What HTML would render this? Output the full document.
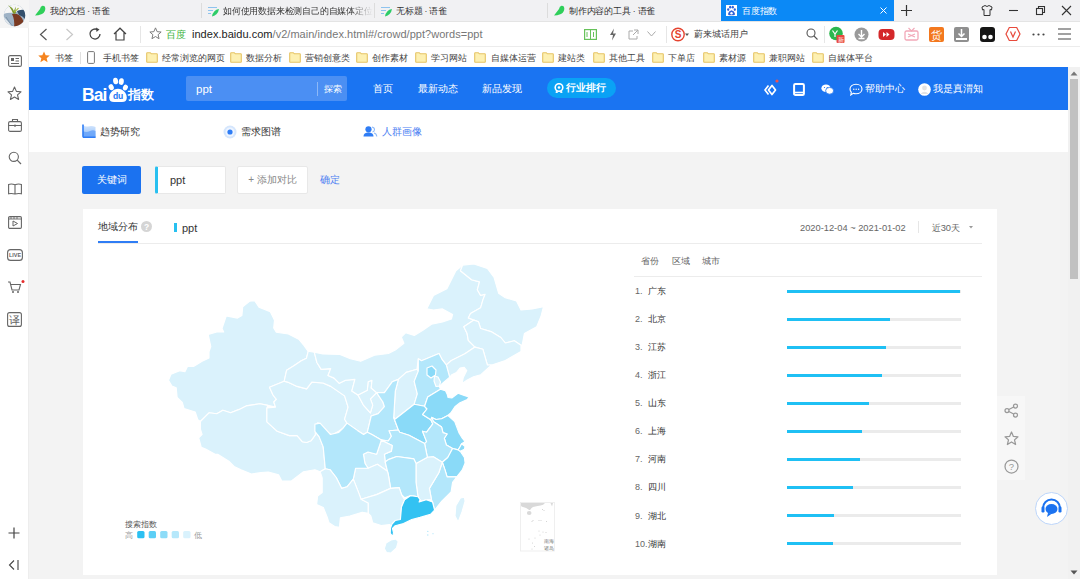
<!DOCTYPE html>
<html><head><meta charset="utf-8">
<style>
*{box-sizing:border-box}
html,body{margin:0;padding:0;width:1080px;height:579px;overflow:hidden;background:#fff;font-family:"Liberation Sans",sans-serif;}
.a{position:absolute;white-space:nowrap}
#tabbar{position:absolute;left:0;top:0;width:1080px;height:21px;background:#f1f1f3;}
.tab{position:absolute;top:0;height:21px;font-size:8.5px;color:#333;line-height:21px;letter-spacing:-0.2px}
.tsep{position:absolute;top:3px;width:1px;height:15px;background:#dcdcdc}
#addr{position:absolute;left:29px;top:21px;width:1051px;height:25px;background:#fff;border-top:1px solid #e4e4e4}
#bm{position:absolute;left:29px;top:46px;width:1051px;height:21px;background:#fff;border-top:1px solid #ececec;font-size:8.5px;color:#444}
#side{position:absolute;left:0;top:21px;width:29px;height:558px;background:#fff;border-right:1px solid #ededed}
#page{position:absolute;left:29px;top:67px;width:1039px;height:512px;background:#f3f3f3;overflow:hidden}
#hdr{position:absolute;left:0;top:0;width:1039px;height:43px;background:#1a74f2}
#subnav{position:absolute;left:0;top:43px;width:1039px;height:42px;background:#fff}
#sb{position:absolute;left:1068px;top:67px;width:12px;height:512px;background:#f1f1f1}
.bt{top:5px;line-height:12px}
.hn{top:16px;font-size:10px;color:#fff;line-height:12px}
.sn{top:16px;font-size:10px;color:#333;line-height:12px}
.th{top:46px;font-size:9px;color:#666;line-height:12px}
.rk{left:552px;font-size:9px;color:#666;line-height:12px}
.rn{left:565px;font-size:9px;color:#333;line-height:12px}
.fold{position:absolute;top:6px;width:11px;height:9px;background:#f8e6a5;border:1px solid #e0c66e;border-radius:1px}
</style></head>
<body>
<div id="tabbar">
  <div class="tsep" style="left:201px"></div>
  <div class="tsep" style="left:374px"></div>
  <div class="tsep" style="left:547px"></div>
  <svg class="a" style="left:34px;top:5px" width="12" height="11" viewBox="0 0 12 11"><path d="M1 10.5 L6 4 Q6.5 1 8.5 0.8 Q11 0.5 11.3 3 Q11.5 7 8 9 Q4 10.5 1 10.5Z" fill="#2fcf5a"/></svg>
  <div class="tab" style="left:50px;top:1px">我的文档 · 语雀</div>
  <svg class="a" style="left:208px;top:6px" width="12" height="11" viewBox="0 0 12 11"><path d="M0 1.5h9M0 4.5h5M0 7.5h3" stroke="#8ec3ee" stroke-width="1"/><path d="M4 10.5 Q5 4 11 3 Q10 9 4 10.5Z" fill="#2ccc68"/></svg>
  <div class="tab" style="left:223px;top:1px;width:150px;overflow:hidden;-webkit-mask-image:linear-gradient(90deg,#000 85%,transparent)">如何使用数据来检测自己的自媒体定位</div>
  <svg class="a" style="left:381px;top:6px" width="12" height="11" viewBox="0 0 12 11"><path d="M0 1.5h9M0 4.5h5M0 7.5h3" stroke="#8ec3ee" stroke-width="1"/><path d="M4 10.5 Q5 4 11 3 Q10 9 4 10.5Z" fill="#2ccc68"/></svg>
  <div class="tab" style="left:396px;top:1px">无标题 · 语雀</div>
  <svg class="a" style="left:553px;top:5px" width="12" height="11" viewBox="0 0 12 11"><path d="M1 10.5 L6 4 Q6.5 1 8.5 0.8 Q11 0.5 11.3 3 Q11.5 7 8 9 Q4 10.5 1 10.5Z" fill="#2fcf5a"/></svg>
  <div class="tab" style="left:569px;top:1px">制作内容的工具 · 语雀</div>
  <div class="a" style="left:721px;top:0;width:173px;height:21px;background:#0b89f6"></div>
  <div class="a" style="left:726px;top:5px;width:11px;height:11px;background:#fff"></div>
  <svg class="a" style="left:726px;top:5px" width="11" height="11" viewBox="0 0 11 11"><ellipse cx="2.2" cy="4.6" rx="1.1" ry="1.4" fill="#2f62d8"/><ellipse cx="4.2" cy="2.2" rx="1.1" ry="1.4" fill="#2f62d8"/><ellipse cx="6.8" cy="2.2" rx="1.1" ry="1.4" fill="#2f62d8"/><ellipse cx="8.8" cy="4.6" rx="1.1" ry="1.4" fill="#2f62d8"/><path d="M2 8.8 Q2.5 6 5.5 5.3 Q8.5 6 9 8.8 Q9 10.3 7.5 10.3 H3.5 Q2 10.3 2 8.8Z" fill="#2f62d8"/><circle cx="5.5" cy="8.3" r="1.2" fill="#fff"/></svg>
  <div class="tab" style="left:742px;top:1px;color:#fff">百度指数</div>
  <svg class="a" style="left:880px;top:7px" width="7" height="7" viewBox="0 0 7 7"><path d="M0.5 0.5L6.5 6.5M6.5 0.5L0.5 6.5" stroke="#fff" stroke-width="1"/></svg>
  <svg class="a" style="left:900px;top:4px" width="13" height="13" viewBox="0 0 13 13"><path d="M6.5 1V12M1 6.5H12" stroke="#333" stroke-width="1.2"/></svg>
  <svg class="a" style="left:981px;top:4px" width="12" height="13" viewBox="0 0 12 13"><path d="M4 1.5 L1 3 L1.5 6 L3 5.5 V11.5 H9 V5.5 L10.5 6 L11 3 L8 1.5 Q6 3.5 4 1.5Z" fill="none" stroke="#333" stroke-width="1"/></svg>
  <svg class="a" style="left:1008px;top:5px" width="11" height="11" viewBox="0 0 11 11"><path d="M1 5.5H10" stroke="#333" stroke-width="1.1"/></svg>
  <svg class="a" style="left:1035px;top:5px" width="11" height="11" viewBox="0 0 11 11"><rect x="1.5" y="3.5" width="6" height="6" fill="none" stroke="#333" stroke-width="1.1"/><path d="M3.5 3.5V1.5H9.5V7.5H7.5" fill="none" stroke="#333" stroke-width="1.1"/></svg>
  <svg class="a" style="left:1061px;top:5px" width="11" height="11" viewBox="0 0 11 11"><path d="M1 1L10 10M10 1L1 10" stroke="#333" stroke-width="1.1"/></svg>
</div>
<div id="side">
  <svg class="a" style="left:8px;top:34px" width="14" height="12" viewBox="0 0 14 12"><rect x="0.6" y="0.6" width="12.8" height="10.8" rx="1.5" fill="none" stroke="#666" stroke-width="1.1"/><rect x="3" y="3" width="3" height="3" fill="#666"/><path d="M7.5 3.5H11M7.5 6H11M3 8.5H11" stroke="#666" stroke-width="1"/></svg>
  <svg class="a" style="left:7px;top:65px" width="15" height="15" viewBox="0 0 15 15"><path d="M7.5 1 L9.4 5.4 L14 5.8 L10.5 8.9 L11.6 13.5 L7.5 11 L3.4 13.5 L4.5 8.9 L1 5.8 L5.6 5.4Z" fill="none" stroke="#666" stroke-width="1.1" stroke-linejoin="round"/></svg>
  <svg class="a" style="left:8px;top:97px" width="14" height="14" viewBox="0 0 14 14"><rect x="0.6" y="3.6" width="12.8" height="9.8" rx="1.5" fill="none" stroke="#666" stroke-width="1.1"/><path d="M4.5 3.5V1.5H9.5V3.5M0.6 7.5H13.4M7 6.5V9" fill="none" stroke="#666" stroke-width="1.1"/></svg>
  <svg class="a" style="left:8px;top:130px" width="14" height="14" viewBox="0 0 14 14"><circle cx="5.8" cy="5.8" r="4.6" fill="none" stroke="#666" stroke-width="1.1"/><path d="M9.2 9.2L13 13" stroke="#666" stroke-width="1.2"/></svg>
  <svg class="a" style="left:8px;top:162px" width="14" height="12" viewBox="0 0 14 12"><path d="M0.6 1.5 Q3.5 0.5 7 1.8 Q10.5 0.5 13.4 1.5 V10.8 Q10.5 10 7 11 Q3.5 10 0.6 10.8Z M7 1.8V11" fill="none" stroke="#666" stroke-width="1.1"/></svg>
  <svg class="a" style="left:8px;top:195px" width="14" height="13" viewBox="0 0 14 13"><rect x="0.6" y="0.6" width="12.8" height="11.8" rx="1.2" fill="none" stroke="#666" stroke-width="1.1"/><path d="M0.6 3H13.4M3 0.6V3M6 0.6V3M9 0.6V3" stroke="#666" stroke-width="0.9"/><path d="M5 5 L9.5 7.5 L5 10Z" fill="none" stroke="#666" stroke-width="1"/></svg>
  <svg class="a" style="left:7px;top:228px" width="16" height="12" viewBox="0 0 16 12"><rect x="0.6" y="0.6" width="14.8" height="10.8" rx="3" fill="none" stroke="#666" stroke-width="1.1"/><text x="8" y="8.3" text-anchor="middle" font-size="5.5" font-weight="bold" fill="#666" font-family="Liberation Sans">LIVE</text></svg>
  <svg class="a" style="left:7px;top:259px" width="18" height="14" viewBox="0 0 18 14"><path d="M1 2 H3 L5 10 H12 L13.5 4.5 H4" fill="none" stroke="#666" stroke-width="1.1"/><circle cx="6" cy="12" r="1" fill="#666"/><circle cx="11" cy="12" r="1" fill="#666"/><circle cx="16" cy="1.5" r="1.5" fill="#e52c2c"/></svg>
  <svg class="a" style="left:7px;top:291px" width="15" height="15" viewBox="0 0 15 15"><rect x="0.6" y="0.6" width="13.8" height="13.8" rx="2" fill="none" stroke="#666" stroke-width="1.1"/><text x="7.5" y="11.5" text-anchor="middle" font-size="10.5" fill="#666" font-family="Liberation Sans">译</text></svg>
  <svg class="a" style="left:8px;top:506px" width="12" height="12" viewBox="0 0 12 12"><path d="M6 0.5V11.5M0.5 6H11.5" stroke="#444" stroke-width="1.2"/></svg>
  <svg class="a" style="left:8px;top:538px" width="12" height="12" viewBox="0 0 12 12"><path d="M6 1.5 L1.5 6 L6 10.5M10 1V11" fill="none" stroke="#444" stroke-width="1.1"/></svg>
</div>
<div id="avatar" class="a" style="left:0;top:0;width:29px;height:28px;background:#f5f5f5">
  <svg class="a" style="left:3px;top:4px" width="23" height="23" viewBox="0 0 23 23"><defs><clipPath id="avc"><circle cx="11.5" cy="11.5" r="10.7"/></clipPath></defs><g clip-path="url(#avc)"><rect x="0" y="0" width="23" height="23" fill="#9fb3c6"/><path d="M0 0 H23 V6 Q16 5 12 9 Q6 8 0 10Z" fill="#f6f6f6"/><path d="M14 7 Q19 5 23 6 V16 Q20 12 16 11Z" fill="#34506c"/><path d="M9 10 Q13 9 16 11 Q20 14 21 20 L14 23 H11 Q12 16 9 10Z" fill="#7a3a22"/><path d="M0 12 Q4 16 9 22 L11 23 H0Z" fill="#dfe6ec"/><path d="M3 13 Q6 18 10 23" stroke="#7f95aa" stroke-width="1" fill="none"/></g><path d="M5 1 Q7 3 8.5 6 Q9.5 9 11 10 L13 9 Q12 6 13 2.5 Q11.5 5 11 7 Q9 3 5 1Z" fill="#7d9a2e"/><path d="M11 8 Q14 6 15.5 4" stroke="#a9b83a" stroke-width="1.2" fill="none"/></svg>
</div>
<div id="addr">
  <svg class="a" style="left:10px;top:6px" width="9" height="13" viewBox="0 0 9 13"><path d="M7.5 1 L1.5 6.5 L7.5 12" fill="none" stroke="#555" stroke-width="1.2"/></svg>
  <svg class="a" style="left:36px;top:6px" width="9" height="13" viewBox="0 0 9 13"><path d="M1.5 1 L7.5 6.5 L1.5 12" fill="none" stroke="#c8c8c8" stroke-width="1.2"/></svg>
  <svg class="a" style="left:59px;top:5px" width="14" height="14" viewBox="0 0 14 14"><path d="M12 7 A5 5 0 1 1 9.5 2.7" fill="none" stroke="#444" stroke-width="1.3"/><path d="M8 0.5 L11.5 2.5 L8.5 5Z" fill="#444"/></svg>
  <svg class="a" style="left:84px;top:5px" width="14" height="14" viewBox="0 0 14 14"><path d="M1 7 L7 1.2 L13 7 M3 5.5 V13 H11 V5.5" fill="none" stroke="#444" stroke-width="1.2"/></svg>
  <div class="a" style="left:111px;top:4px;width:1px;height:17px;background:#e6e6e6"></div>
  <svg class="a" style="left:120px;top:5px" width="13" height="13" viewBox="0 0 15 15"><path d="M7.5 1 L9.4 5.4 L14 5.8 L10.5 8.9 L11.6 13.5 L7.5 11 L3.4 13.5 L4.5 8.9 L1 5.8 L5.6 5.4Z" fill="none" stroke="#777" stroke-width="1.1" stroke-linejoin="round"/></svg>
  <div class="a" style="left:137px;top:6px;font-size:10px;color:#3ab33a;line-height:13px">百度</div>
  <div class="a" style="left:163px;top:4px;font-size:11px;color:#222;line-height:17px;letter-spacing:0.03px">index.baidu.com<span style="color:#777">/v2/main/index.html#/crowd/ppt?words=ppt</span></div>
  <svg class="a" style="left:555px;top:7px" width="13" height="11" viewBox="0 0 13 11"><rect x="0.6" y="0.6" width="11.8" height="9.8" fill="none" stroke="#67c25a" stroke-width="1.2"/><path d="M6.5 0.6V10.4M3 3V8M9.5 3V8" stroke="#67c25a" stroke-width="1"/></svg>
  <svg class="a" style="left:580px;top:6px" width="8" height="13" viewBox="0 0 8 13"><path d="M5 0.5 L1 7 H4 L3 12.5 L7 5.5 H4Z" fill="#666"/></svg>
  <svg class="a" style="left:599px;top:7px" width="11" height="11" viewBox="0 0 11 11"><path d="M5 2H1V10H9V7M6 1H10V5M10 1L5 6" fill="none" stroke="#aaa" stroke-width="1"/></svg>
  <svg class="a" style="left:618px;top:9px" width="9" height="6" viewBox="0 0 9 6"><path d="M0.5 0.5L4.5 5L8.5 0.5" fill="none" stroke="#aaa" stroke-width="1"/></svg>
  <div class="a" style="left:637px;top:4px;width:1px;height:17px;background:#e6e6e6"></div>
  <svg class="a" style="left:642px;top:5px" width="18" height="15" viewBox="0 0 18 15"><circle cx="7" cy="7.5" r="6.2" fill="#fff" stroke="#e5432f" stroke-width="1.4"/><text x="7" y="11.2" text-anchor="middle" font-size="10" font-weight="bold" fill="#e5432f" font-family="Liberation Sans">S</text><path d="M14 6.5H18L16 9Z" fill="#555"/></svg>
  <div class="a" style="left:665px;top:6px;font-size:9px;color:#444;line-height:13px">蔚来城话用户</div>
  <svg class="a" style="left:777px;top:6px" width="12" height="12" viewBox="0 0 12 12"><circle cx="5" cy="5" r="4" fill="none" stroke="#555" stroke-width="1.1"/><path d="M8 8L11.5 11.5" stroke="#555" stroke-width="1.1"/></svg>
  <div class="a" style="left:795px;top:4px;width:1px;height:17px;background:#e6e6e6"></div>
  <svg class="a" style="left:800px;top:4px" width="16" height="17" viewBox="0 0 16 17"><circle cx="7" cy="7.5" r="6.8" fill="#2cb74e"/><path d="M3.5 4.5 L6 8 L8.5 4.5 M6 8V11" stroke="#fff" stroke-width="1.2" fill="none"/><rect x="7.5" y="9" width="8" height="8" rx="1" fill="#e8493f"/><text x="11.5" y="15.8" text-anchor="middle" font-size="6" fill="#fff" font-family="Liberation Sans">新</text></svg>
  <svg class="a" style="left:825px;top:5px" width="15" height="15" viewBox="0 0 15 15"><circle cx="7.5" cy="7.5" r="7" fill="#9a9a9a"/><path d="M7.5 3V9M4.5 7L7.5 10L10.5 7M4.5 11.5H10.5" stroke="#fff" stroke-width="1.4" fill="none"/></svg>
  <svg class="a" style="left:849px;top:6px" width="17" height="13" viewBox="0 0 17 13"><rect x="0.5" y="1" width="16" height="11" rx="4" fill="#d4282a"/><path d="M5 4 L8 6.5 L5 9Z M8.5 4 L11.5 6.5 L8.5 9Z" fill="#fff"/></svg>
  <svg class="a" style="left:875px;top:5px" width="15" height="15" viewBox="0 0 15 15"><rect x="1" y="4" width="13" height="9" rx="1.5" fill="none" stroke="#f2a8b8" stroke-width="1.3"/><path d="M4.5 1L7.5 4L10.5 1M4 7L11 10M11 7L4 10" stroke="#f2a8b8" stroke-width="1.1" fill="none"/></svg>
  <svg class="a" style="left:900px;top:5px" width="15" height="15" viewBox="0 0 15 15"><rect x="0" y="0" width="15" height="15" rx="2" fill="#f3781e"/><text x="7.5" y="12" text-anchor="middle" font-size="11" fill="#fff" font-family="Liberation Sans">货</text></svg>
  <svg class="a" style="left:925px;top:5px" width="15" height="15" viewBox="0 0 15 15"><rect x="0" y="0" width="15" height="15" rx="2" fill="#8f8f8f"/><path d="M7.5 2V9M4.5 6.5L7.5 9.5L10.5 6.5" stroke="#fff" stroke-width="1.5" fill="none"/><rect x="2" y="11" width="11" height="2" fill="#fff"/></svg>
  <svg class="a" style="left:951px;top:5px" width="15" height="15" viewBox="0 0 15 15"><rect x="0" y="0" width="15" height="15" rx="3" fill="#151515"/><circle cx="4.5" cy="10" r="2.3" fill="#fff"/><circle cx="10.5" cy="10" r="2.3" fill="#fff"/></svg>
  <svg class="a" style="left:976px;top:4px" width="16" height="16" viewBox="0 0 16 16"><path d="M4.3 1.5 H11.7 L15 8 L11.7 14.5 H4.3 L1 8Z" fill="none" stroke="#e84a3c" stroke-width="1.2"/><path d="M5.5 5.5 L8 11 L10.5 5.5" fill="none" stroke="#e84a3c" stroke-width="1.2"/></svg>
  <svg class="a" style="left:1003px;top:11px" width="13" height="3" viewBox="0 0 13 3"><circle cx="1.5" cy="1.5" r="1.1" fill="#444"/><circle cx="6.5" cy="1.5" r="1.1" fill="#444"/><circle cx="11.5" cy="1.5" r="1.1" fill="#444"/></svg>
  <svg class="a" style="left:1029px;top:6px" width="13" height="12" viewBox="0 0 13 12"><path d="M0 1H13M0 6H13M0 11H13" stroke="#444" stroke-width="1.2"/></svg>
</div>
<div id="bm">
  <svg class="a" style="left:9px;top:4px" width="12" height="12" viewBox="0 0 15 15"><path d="M7.5 0.5 L9.6 5.2 L14.7 5.6 L10.8 9 L12 14 L7.5 11.3 L3 14 L4.2 9 L0.3 5.6 L5.4 5.2Z" fill="#f5841f"/></svg>
  <div class="a bt" style="left:26px">书签</div>
  <div class="a" style="left:51px;top:5px;width:1px;height:12px;background:#e0e0e0"></div>
  <svg class="a" style="left:58px;top:4px" width="8" height="13" viewBox="0 0 8 13"><rect x="0.6" y="0.6" width="6.8" height="11.8" rx="1" fill="none" stroke="#777" stroke-width="1"/></svg>
  <div class="a bt" style="left:74px">手机书签</div>
  <svg class="a" style="left:117px;top:5px" width="12" height="11" viewBox="0 0 12 11"><path d="M0.7 1.2 Q0.7 0.7 1.2 0.7 H4.3 L5.3 1.8 H10.8 Q11.3 1.8 11.3 2.3 V9.8 Q11.3 10.3 10.8 10.3 H1.2 Q0.7 10.3 0.7 9.8Z" fill="#fdf0b2" stroke="#e6c465" stroke-width="1.1"/></svg><div class="a bt" style="left:133px">经常浏览的网页</div>
  <svg class="a" style="left:201px;top:5px" width="12" height="11" viewBox="0 0 12 11"><path d="M0.7 1.2 Q0.7 0.7 1.2 0.7 H4.3 L5.3 1.8 H10.8 Q11.3 1.8 11.3 2.3 V9.8 Q11.3 10.3 10.8 10.3 H1.2 Q0.7 10.3 0.7 9.8Z" fill="#fdf0b2" stroke="#e6c465" stroke-width="1.1"/></svg><div class="a bt" style="left:217px">数据分析</div>
  <svg class="a" style="left:260px;top:5px" width="12" height="11" viewBox="0 0 12 11"><path d="M0.7 1.2 Q0.7 0.7 1.2 0.7 H4.3 L5.3 1.8 H10.8 Q11.3 1.8 11.3 2.3 V9.8 Q11.3 10.3 10.8 10.3 H1.2 Q0.7 10.3 0.7 9.8Z" fill="#fdf0b2" stroke="#e6c465" stroke-width="1.1"/></svg><div class="a bt" style="left:276px">营销创意类</div>
  <svg class="a" style="left:327px;top:5px" width="12" height="11" viewBox="0 0 12 11"><path d="M0.7 1.2 Q0.7 0.7 1.2 0.7 H4.3 L5.3 1.8 H10.8 Q11.3 1.8 11.3 2.3 V9.8 Q11.3 10.3 10.8 10.3 H1.2 Q0.7 10.3 0.7 9.8Z" fill="#fdf0b2" stroke="#e6c465" stroke-width="1.1"/></svg><div class="a bt" style="left:343px">创作素材</div>
  <svg class="a" style="left:386px;top:5px" width="12" height="11" viewBox="0 0 12 11"><path d="M0.7 1.2 Q0.7 0.7 1.2 0.7 H4.3 L5.3 1.8 H10.8 Q11.3 1.8 11.3 2.3 V9.8 Q11.3 10.3 10.8 10.3 H1.2 Q0.7 10.3 0.7 9.8Z" fill="#fdf0b2" stroke="#e6c465" stroke-width="1.1"/></svg><div class="a bt" style="left:402px">学习网站</div>
  <svg class="a" style="left:445px;top:5px" width="12" height="11" viewBox="0 0 12 11"><path d="M0.7 1.2 Q0.7 0.7 1.2 0.7 H4.3 L5.3 1.8 H10.8 Q11.3 1.8 11.3 2.3 V9.8 Q11.3 10.3 10.8 10.3 H1.2 Q0.7 10.3 0.7 9.8Z" fill="#fdf0b2" stroke="#e6c465" stroke-width="1.1"/></svg><div class="a bt" style="left:462px">自媒体运营</div>
  <svg class="a" style="left:513px;top:5px" width="12" height="11" viewBox="0 0 12 11"><path d="M0.7 1.2 Q0.7 0.7 1.2 0.7 H4.3 L5.3 1.8 H10.8 Q11.3 1.8 11.3 2.3 V9.8 Q11.3 10.3 10.8 10.3 H1.2 Q0.7 10.3 0.7 9.8Z" fill="#fdf0b2" stroke="#e6c465" stroke-width="1.1"/></svg><div class="a bt" style="left:529px">建站类</div>
  <svg class="a" style="left:564px;top:5px" width="12" height="11" viewBox="0 0 12 11"><path d="M0.7 1.2 Q0.7 0.7 1.2 0.7 H4.3 L5.3 1.8 H10.8 Q11.3 1.8 11.3 2.3 V9.8 Q11.3 10.3 10.8 10.3 H1.2 Q0.7 10.3 0.7 9.8Z" fill="#fdf0b2" stroke="#e6c465" stroke-width="1.1"/></svg><div class="a bt" style="left:580px">其他工具</div>
  <svg class="a" style="left:623px;top:5px" width="12" height="11" viewBox="0 0 12 11"><path d="M0.7 1.2 Q0.7 0.7 1.2 0.7 H4.3 L5.3 1.8 H10.8 Q11.3 1.8 11.3 2.3 V9.8 Q11.3 10.3 10.8 10.3 H1.2 Q0.7 10.3 0.7 9.8Z" fill="#fdf0b2" stroke="#e6c465" stroke-width="1.1"/></svg><div class="a bt" style="left:639px">下单店</div>
  <svg class="a" style="left:674px;top:5px" width="12" height="11" viewBox="0 0 12 11"><path d="M0.7 1.2 Q0.7 0.7 1.2 0.7 H4.3 L5.3 1.8 H10.8 Q11.3 1.8 11.3 2.3 V9.8 Q11.3 10.3 10.8 10.3 H1.2 Q0.7 10.3 0.7 9.8Z" fill="#fdf0b2" stroke="#e6c465" stroke-width="1.1"/></svg><div class="a bt" style="left:690px">素材源</div>
  <svg class="a" style="left:724px;top:5px" width="12" height="11" viewBox="0 0 12 11"><path d="M0.7 1.2 Q0.7 0.7 1.2 0.7 H4.3 L5.3 1.8 H10.8 Q11.3 1.8 11.3 2.3 V9.8 Q11.3 10.3 10.8 10.3 H1.2 Q0.7 10.3 0.7 9.8Z" fill="#fdf0b2" stroke="#e6c465" stroke-width="1.1"/></svg><div class="a bt" style="left:740px">兼职网站</div>
  <svg class="a" style="left:783px;top:5px" width="12" height="11" viewBox="0 0 12 11"><path d="M0.7 1.2 Q0.7 0.7 1.2 0.7 H4.3 L5.3 1.8 H10.8 Q11.3 1.8 11.3 2.3 V9.8 Q11.3 10.3 10.8 10.3 H1.2 Q0.7 10.3 0.7 9.8Z" fill="#fdf0b2" stroke="#e6c465" stroke-width="1.1"/></svg><div class="a bt" style="left:799px">自媒体平台</div>
</div>
<div id="page">
  <div id="hdr">
    <div class="a" style="left:53px;top:18px;font-size:17.5px;font-weight:bold;color:#fff;line-height:20px;letter-spacing:-0.9px">Bai</div>
    <svg class="a" style="left:79px;top:10px" width="20" height="26" viewBox="0 0 20 26"><ellipse cx="3.2" cy="10.2" rx="2.5" ry="3.1" fill="#fff" transform="rotate(-25 3.2 10.2)"/><ellipse cx="7.6" cy="4" rx="2.5" ry="3.3" fill="#fff" transform="rotate(-8 7.6 4)"/><ellipse cx="13.3" cy="4.6" rx="2.5" ry="3.3" fill="#fff" transform="rotate(8 13.3 4.6)"/><ellipse cx="17.4" cy="10.6" rx="2.4" ry="3" fill="#fff" transform="rotate(25 17.4 10.6)"/><path d="M1.2 20.5 Q1.5 15 6.5 12.5 Q10 11 13.5 12.5 Q18.5 15 18.8 20.5 Q18.8 25 14 25 H6 Q1.2 25 1.2 20.5Z" fill="#fff"/><text x="10" y="22.3" text-anchor="middle" font-size="8.5" font-weight="bold" fill="#1a74f2" font-family="Liberation Sans" letter-spacing="-0.3">du</text></svg>
    <div class="a" style="left:99px;top:21px;font-size:12.5px;font-weight:bold;color:#fff;line-height:15px;letter-spacing:-0.5px">指数</div>
    <div class="a" style="left:157px;top:9px;width:161px;height:25px;background:#4b8ff3;border-radius:2px"></div>
    <div class="a" style="left:167px;top:15px;font-size:11.5px;color:#fff;line-height:14px">ppt</div>
    <div class="a" style="left:288px;top:15px;width:1px;height:14px;background:#8db8f7"></div>
    <div class="a" style="left:295px;top:17px;font-size:8.5px;color:#fff;line-height:11px">探索</div>
    <div class="a hn" style="left:344px">首页</div>
    <div class="a hn" style="left:389px">最新动态</div>
    <div class="a hn" style="left:453px">新品发现</div>
    <div class="a" style="left:518px;top:11px;width:69px;height:20px;background:#0aa2f5;border-radius:10px"></div>
    <svg class="a" style="left:525px;top:16px" width="10" height="10" viewBox="0 0 10 10"><circle cx="5" cy="4.5" r="3.8" fill="none" stroke="#fff" stroke-width="1.6"/><path d="M2.5 7.5 L2 10 L4 9 M7.5 7.5 L8 10 L6 9" fill="#fff" stroke="#fff" stroke-width="0.8"/><circle cx="5" cy="4.5" r="1.3" fill="#fff"/></svg>
    <div class="a" style="left:537px;top:15px;font-size:10px;font-weight:bold;color:#fff;line-height:12px">行业排行</div>
    <svg class="a" style="left:735px;top:17px" width="16" height="12" viewBox="0 0 16 12"><path d="M4.5 1.5 L1 6 L4.5 10.5 M8 1.5 L11.5 6 L8 10.5 L4.5 6Z" fill="none" stroke="#fff" stroke-width="1.7" stroke-linejoin="round"/></svg><svg class="a" style="left:746px;top:12px" width="4" height="4" viewBox="0 0 4 4"><circle cx="2" cy="2" r="1.6" fill="#f0524f"/></svg>
    <svg class="a" style="left:764px;top:16px" width="12" height="13" viewBox="0 0 12 13"><rect x="1.1" y="1" width="9.8" height="11" rx="1.3" fill="none" stroke="#fff" stroke-width="2"/><path d="M2 9.5H10" stroke="#fff" stroke-width="1.6"/></svg>
    <svg class="a" style="left:792px;top:17px" width="13" height="11" viewBox="0 0 13 11"><ellipse cx="5" cy="4.2" rx="4.6" ry="3.8" fill="#fff"/><ellipse cx="8.6" cy="6.8" rx="4" ry="3.4" fill="#fff" stroke="#1b72f0" stroke-width="0.8"/><circle cx="3.5" cy="3.5" r="0.6" fill="#1b72f0"/><circle cx="6.3" cy="3.5" r="0.6" fill="#1b72f0"/></svg>
    <svg class="a" style="left:820px;top:16px" width="14" height="13" viewBox="0 0 14 13"><path d="M7 1.2 C10.5 1.2 13 3.3 13 6 C13 8.7 10.5 10.8 7 10.8 C6 10.8 5 10.6 4.2 10.3 L1.8 12 L2.3 9.2 C1.5 8.4 1 7.3 1 6 C1 3.3 3.5 1.2 7 1.2Z" fill="none" stroke="#fff" stroke-width="1.1"/><circle cx="4.8" cy="6.2" r="0.7" fill="#fff"/><circle cx="7.2" cy="6.2" r="0.7" fill="#fff"/><circle cx="9.6" cy="6.2" r="0.7" fill="#fff"/></svg>
    <div class="a hn" style="left:836px">帮助中心</div>
    <svg class="a" style="left:889px;top:16px" width="13" height="13" viewBox="0 0 13 13"><circle cx="6.5" cy="6.5" r="6.3" fill="#fff"/><circle cx="6.5" cy="5" r="2.4" fill="#e3e3e3"/><path d="M2.5 11 Q6.5 6.5 10.5 11" fill="#e3e3e3"/></svg>
    <div class="a hn" style="left:904px">我是真渭知</div>
  </div>
  <div id="subnav">
    <svg class="a" style="left:53px;top:14px" width="14" height="14" viewBox="0 0 14 14"><defs><linearGradient id="g1" x1="0" y1="0" x2="0" y2="1"><stop offset="0" stop-color="#d4e6fd"/><stop offset="1" stop-color="#8dbcf9"/></linearGradient></defs><path d="M1 1 Q3 3 6 2.5 Q10 1.5 13.5 3 V13.5 H1Z" fill="url(#g1)"/><path d="M1 7 Q4 9 8 7 Q11 5.5 13.5 7 V13.5 H1Z" fill="#5f9ef8" opacity="0.75"/><path d="M1 0.5V12.3Q1 13.3 2 13.3H13.5" fill="none" stroke="#2f7df5" stroke-width="1.6"/></svg>
    <div class="a sn" style="left:71px">趋势研究</div>
    <svg class="a" style="left:194px;top:15px" width="14" height="14" viewBox="0 0 14 14"><circle cx="7" cy="7" r="6.5" fill="#d5e6fd"/><circle cx="7" cy="7" r="4.5" fill="#eef5ff"/><circle cx="7" cy="7" r="2.6" fill="#2f7df5"/></svg>
    <div class="a sn" style="left:212px">需求图谱</div>
    <svg class="a" style="left:334px;top:16px" width="15" height="11" viewBox="0 0 15 11"><circle cx="5.5" cy="3.3" r="3.1" fill="#2f7df5"/><path d="M0.5 10.5 Q0.5 6.5 5.5 6.5 Q10.5 6.5 10.5 10.5Z" fill="#2f7df5"/><path d="M9 1 Q11.5 1.5 11.5 3.5 Q11.5 5.5 9.5 6 M11 7 Q13.5 7.5 13.8 10.5" fill="none" stroke="#8fbaf8" stroke-width="1.1"/></svg>
    <div class="a sn" style="left:353px;color:#4c7ef2">人群画像</div>
  </div>
  <div class="a" style="left:53px;top:99px;width:59px;height:28px;background:#1b72f0;border-radius:2px;color:#fff;font-size:10px;line-height:28px;text-align:center">关键词</div>
  <div class="a" style="left:126px;top:99px;width:71px;height:28px;background:#fff;border-radius:2px;border:1px solid #e8e8e8;border-left:3px solid #28c0f0"></div>
  <div class="a" style="left:141px;top:106px;font-size:11px;color:#333;line-height:14px">ppt</div>
  <div class="a" style="left:208px;top:99px;width:71px;height:28px;background:#fff;border-radius:2px;border:1px solid #e8e8e8;line-height:26px !important;color:#888;font-size:10px;line-height:28px;text-align:center">+ 添加对比</div>
  <div class="a" style="left:291px;top:106px;font-size:10px;color:#4c7ef2;line-height:13px">确定</div>
  <div id="card" class="a" style="left:54px;top:142px;width:914px;height:366px;background:#fff"><div class="a" style="left:15px;top:12px;font-size:10px;color:#333;line-height:12px">地域分布</div><svg class="a" style="left:58px;top:12px" width="11" height="11" viewBox="0 0 11 11"><circle cx="5.5" cy="5.5" r="5.5" fill="#d5d5d5"/><text x="5.5" y="8.8" text-anchor="middle" font-size="8.5" font-weight="bold" fill="#fff" font-family="Liberation Sans">?</text></svg><div class="a" style="left:91px;top:13.5px;width:2.5px;height:9px;background:#28c0f0"></div><div class="a" style="left:99px;top:12px;font-size:11px;color:#333;line-height:14px">ppt</div><div class="a" style="left:15px;top:32px;width:40px;height:2px;background:#2f7df5"></div><div class="a" style="left:15px;top:34px;width:884px;height:1px;background:#ececec"></div><div class="a" style="left:717px;top:13px;font-size:9.3px;color:#666;line-height:12px">2020-12-04 ~ 2021-01-02</div><div class="a" style="left:835px;top:12px;width:1px;height:12px;background:#e6e6e6"></div><div class="a" style="left:849px;top:13px;font-size:9.3px;color:#666;line-height:12px;letter-spacing:-0.2px">近30天</div><svg class="a" style="left:886px;top:17px" width="4" height="3" viewBox="0 0 4 3"><path d="M0 0H4L2 2.5Z" fill="#999"/></svg><div class="a th" style="left:558px">省份</div><div class="a th" style="left:589px">区域</div><div class="a th" style="left:619px">城市</div><div class="a" style="left:551px;top:67px;width:348px;height:1px;background:#ececec"></div><div class="a rk" style="top:75.7px">1.</div><div class="a rn" style="top:75.7px">广东</div><div class="a" style="left:704px;top:80.5px;width:174px;height:3px;background:#ebebeb"></div><div class="a" style="left:704px;top:80.5px;width:173.4px;height:3px;background:#1fc0f4"></div><div class="a rk" style="top:103.8px">2.</div><div class="a rn" style="top:103.8px">北京</div><div class="a" style="left:704px;top:108.6px;width:174px;height:3px;background:#ebebeb"></div><div class="a" style="left:704px;top:108.6px;width:103.0px;height:3px;background:#1fc0f4"></div><div class="a rk" style="top:131.9px">3.</div><div class="a rn" style="top:131.9px">江苏</div><div class="a" style="left:704px;top:136.7px;width:174px;height:3px;background:#ebebeb"></div><div class="a" style="left:704px;top:136.7px;width:99.0px;height:3px;background:#1fc0f4"></div><div class="a rk" style="top:160.0px">4.</div><div class="a rn" style="top:160.0px">浙江</div><div class="a" style="left:704px;top:164.8px;width:174px;height:3px;background:#ebebeb"></div><div class="a" style="left:704px;top:164.8px;width:95.0px;height:3px;background:#1fc0f4"></div><div class="a rk" style="top:188.1px">5.</div><div class="a rn" style="top:188.1px">山东</div><div class="a" style="left:704px;top:192.9px;width:174px;height:3px;background:#ebebeb"></div><div class="a" style="left:704px;top:192.9px;width:82.0px;height:3px;background:#1fc0f4"></div><div class="a rk" style="top:216.2px">6.</div><div class="a rn" style="top:216.2px">上海</div><div class="a" style="left:704px;top:221.0px;width:174px;height:3px;background:#ebebeb"></div><div class="a" style="left:704px;top:221.0px;width:75.0px;height:3px;background:#1fc0f4"></div><div class="a rk" style="top:244.3px">7.</div><div class="a rn" style="top:244.3px">河南</div><div class="a" style="left:704px;top:249.1px;width:174px;height:3px;background:#ebebeb"></div><div class="a" style="left:704px;top:249.1px;width:73.0px;height:3px;background:#1fc0f4"></div><div class="a rk" style="top:272.4px">8.</div><div class="a rn" style="top:272.4px">四川</div><div class="a" style="left:704px;top:277.2px;width:174px;height:3px;background:#ebebeb"></div><div class="a" style="left:704px;top:277.2px;width:65.6px;height:3px;background:#1fc0f4"></div><div class="a rk" style="top:300.5px">9.</div><div class="a rn" style="top:300.5px">湖北</div><div class="a" style="left:704px;top:305.3px;width:174px;height:3px;background:#ebebeb"></div><div class="a" style="left:704px;top:305.3px;width:47.0px;height:3px;background:#1fc0f4"></div><div class="a rk" style="top:328.6px">10.</div><div class="a rn" style="top:328.6px">湖南</div><div class="a" style="left:704px;top:333.4px;width:174px;height:3px;background:#ebebeb"></div><div class="a" style="left:704px;top:333.4px;width:45.6px;height:3px;background:#1fc0f4"></div><div id="map"></div></div>
</div>
<div id="sb"></div>
<div class="a" style="left:997px;top:396px;width:28px;height:84px;background:#f7f7f7"></div>
<svg class="a" style="left:1004px;top:403px" width="15" height="15" viewBox="0 0 15 15"><circle cx="3" cy="7.5" r="2" fill="none" stroke="#999" stroke-width="1.25"/><circle cx="11.5" cy="3" r="2" fill="none" stroke="#999" stroke-width="1.25"/><circle cx="11.5" cy="12" r="2" fill="none" stroke="#999" stroke-width="1.25"/><path d="M4.8 6.5L9.7 4M4.8 8.5L9.7 11" stroke="#999" stroke-width="1.25"/></svg>
<svg class="a" style="left:1004px;top:431px" width="15" height="15" viewBox="0 0 15 15"><path d="M7.5 1 L9.4 5.4 L14 5.8 L10.5 8.9 L11.6 13.5 L7.5 11 L3.4 13.5 L4.5 8.9 L1 5.8 L5.6 5.4Z" fill="none" stroke="#999" stroke-width="1.25" stroke-linejoin="round"/></svg>
<svg class="a" style="left:1004px;top:459px" width="15" height="15" viewBox="0 0 15 15"><circle cx="7.5" cy="7.5" r="6.5" fill="none" stroke="#999" stroke-width="1.25"/><text x="7.5" y="11" text-anchor="middle" font-size="9.5" fill="#999" font-family="Liberation Sans">?</text></svg>
<div class="a" style="left:1035px;top:492px;width:33px;height:33px;border-radius:50%;background:#fff;border:1px solid #bcd5fa"></div>
<svg class="a" style="left:1040px;top:498px" width="23" height="21" viewBox="0 0 23 21"><path d="M3 10 A8.5 8.5 0 0 1 20 10" fill="none" stroke="#1b72f0" stroke-width="2"/><rect x="1.5" y="8.5" width="3" height="6" rx="1.2" fill="#1b72f0"/><rect x="18.5" y="8.5" width="3" height="6" rx="1.2" fill="#1b72f0"/><ellipse cx="11.5" cy="11" rx="6" ry="5" fill="#1b72f0"/><path d="M8 15 L7 19 L12 15.5Z" fill="#1b72f0"/></svg>
<div id="sbt" class="a" style="left:1070px;top:79px;width:8px;height:200px;background:#c1c1c1"></div>
<svg class="a" style="left:1070px;top:71px" width="8" height="5" viewBox="0 0 8 5"><path d="M0.5 4.5H7.5L4 0.5Z" fill="#777"/></svg>
<svg class="a" style="left:1070px;top:570px" width="8" height="5" viewBox="0 0 8 5"><path d="M0.5 0.5H7.5L4 4.5Z" fill="#555"/></svg>

<!--MAP--><svg class="a" style="left:0;top:0" width="1080" height="579" viewBox="0 0 1080 579">
<g stroke="#fff" stroke-width="1.15" stroke-linejoin="round">
<polygon fill="#daf2fc" points="249.5,301.2 254.7,300.7 259.0,307.3 270.2,311.6 274.5,320.2 273.7,328.0 276.3,332.3 288.4,334.0 298.7,339.2 303.9,345.3 308.2,351.3 306.5,358.2 301.3,360.8 293.5,366.0 286.6,370.3 284.2,381.2 269.5,387.3 273.0,395.0 276.4,399.4 273.8,402.0 275.5,407.1 267.8,405.4 260.0,403.7 246.2,405.9 239.3,409.4 230.6,412.8 222.9,410.2 216.8,413.7 209.0,412.8 200.4,421.5 197.8,419.7 195.2,412.0 184.0,408.5 182.3,402.5 177.1,397.3 176.2,387.8 171.9,386.0 168.5,380.3 171.0,374.3 179.7,370.8 184.9,371.7 187.5,366.5 193.5,366.5 202.1,361.3 209.0,357.9 209.0,351.8 210.8,346.6 208.2,334.5 216.8,332.0 223.7,332.0 222.0,328.5 226.3,315.9 237.5,318.1 241.9,315.5 242.7,306.9"/>
<polygon fill="#daf2fc" points="200.4,421.5 209.0,412.8 216.8,413.7 222.9,410.2 230.6,412.8 239.3,409.4 246.2,405.9 260.0,403.7 267.8,405.4 266.9,408.0 266.9,421.8 277.3,431.3 289.4,435.6 297.1,435.6 302.3,441.7 306.6,442.5 311.0,440.8 315.3,434.8 315.3,425.3 317.9,422.7 314.9,424.1 314.9,431.4 319.1,436.6 323.2,446.9 325.3,468.7 320.1,471.8 314.9,469.7 303.5,471.8 291.1,481.1 281.8,481.1 278.7,474.9 268.3,472.0 261.0,472.5 251.4,474.1 241.0,469.8 234.1,466.4 228.9,461.2 217.7,454.3 215.1,454.3 205.6,449.1 201.3,447.4 198.7,437.9 202.1,434.4 200.4,429.2 200.4,422.3"/>
<polygon fill="#daf2fc" points="284.2,381.2 287.6,382.1 297.1,386.4 306.6,388.9 311.8,382.1 323.0,383.0 330.8,386.4 344.6,395.9 348.1,407.1 344.6,419.2 347.0,423.1 342.9,428.3 338.6,431.3 332.5,434.8 324.8,432.2 317.9,422.7 315.3,425.3 315.3,434.8 311.0,440.8 306.6,442.5 302.3,441.7 297.1,435.6 289.4,435.6 277.3,431.3 266.9,421.8 266.9,408.0 275.5,407.1 273.8,402.0 276.4,399.4 273.0,395.0 269.5,387.3"/>
<polygon fill="#daf2fc" points="308.2,351.3 314.3,352.2 316.9,362.5 321.2,369.4 330.7,368.6 328.0,375.5 334.1,378.1 339.3,383.3 345.5,380.2 354.9,379.4 351.8,391.1 358.0,395.0 363.4,405.1 370.4,412.9 372.7,405.1 370.4,398.9 376.6,392.6 382.9,402.0 384.4,406.6 378.2,413.6 371.2,416.0 367.3,432.3 363.6,434.5 357.4,430.4 347.0,423.1 344.6,419.2 348.1,407.1 344.6,395.9 330.8,386.4 323.0,383.0 311.8,382.1 306.6,388.9 297.1,386.4 287.6,382.1 284.2,381.2 286.6,370.3 293.5,366.0 301.3,360.8 306.5,358.2"/>
<polygon fill="#daf2fc" points="358.0,395.0 367.3,390.3 368.1,381.8 372.0,380.2 371.2,388.0 376.6,392.6 370.4,398.9 372.7,405.1 370.4,412.9 363.4,405.1"/>
<polygon fill="#daf2fc" points="314.3,352.2 322.9,353.9 340.0,354.4 350.4,358.7 360.7,361.3 374.5,355.3 388.4,353.5 395.3,350.1 403.9,343.2 401.3,337.1 405.6,332.8 414.3,335.4 422.9,330.2 431.5,324.2 442.5,322.0 451.4,319.0 452.6,314.5 442.5,308.9 433.5,310.0 426.7,308.9 433.5,295.4 446.9,288.7 455.9,270.7 462.7,265.1 460.4,270.7 471.6,279.7 479.5,281.9 477.3,289.8 480.6,295.4 485.1,294.3 482.9,299.9 480.6,307.8 470.5,313.4 468.3,317.9 473.9,320.1 463.8,326.8 467.1,333.6 468.3,340.3 475.0,347.1 464.9,353.8 451.4,360.5 446.3,364.9 442.2,359.7 439.0,353.5 421.5,360.7 418.3,358.7 417.0,369.3 406.2,372.4 398.4,379.4 392.2,381.8 384.4,392.6 376.6,392.6 371.2,388.0 372.0,380.2 368.1,381.8 367.3,390.3 358.0,395.0 351.8,391.1 354.9,379.4 345.5,380.2 339.3,383.3 334.1,378.1 328.0,375.5 330.7,368.6 321.2,369.4 316.9,362.5"/>
<polygon fill="#daf2fc" points="462.7,265.1 473.9,264.0 487.4,268.5 494.1,277.5 498.6,293.2 505.3,297.7 516.5,301.0 521.0,310.0 532.3,308.9 543.5,306.6 541.2,315.6 536.7,326.8 524.4,333.6 522.2,344.8 521.0,345.2 514.3,340.7 505.3,343.0 500.8,337.5 491.8,331.9 480.6,328.5 478.5,321.8 473.9,320.1 468.3,317.9 470.5,313.4 480.6,307.8 482.9,299.9 485.1,294.3 480.6,295.4 477.3,289.8 479.5,281.9 471.6,279.7 460.4,270.7"/>
<polygon fill="#daf2fc" points="473.9,320.1 478.5,321.8 480.6,328.5 491.8,331.9 500.8,337.5 505.3,343.0 514.3,340.7 521.0,345.2 521.0,351.5 505.3,360.5 491.8,365.0 487.4,365.0 482.9,349.3 475.0,347.1 468.3,340.3 467.1,333.6 463.8,326.8"/>
<polygon fill="#daf2fc" points="475.0,347.1 482.9,349.3 487.4,365.0 491.8,365.0 490.0,366.4 480.8,374.7 473.5,376.8 467.3,379.9 462.1,383.5 463.2,377.8 466.8,370.5 464.2,367.4 460.0,368.0 456.4,372.6 451.8,374.7 449.7,377.3 446.3,364.9 451.4,360.5 464.9,353.8"/>
<polygon fill="#daf2fc" points="406.2,372.4 417.0,369.3 418.3,371.1 414.2,381.4 417.3,393.9 414.2,404.2 395.3,419.0 393.7,417.5 395.3,391.1 398.4,379.4"/>
<polygon fill="#b3e7fb" points="376.6,392.6 384.4,392.6 392.2,381.8 398.4,379.4 395.3,391.1 393.7,417.5 398.4,430.0 389.1,430.7 391.4,436.2 388.3,441.0 380.5,439.5 371.9,434.5 367.3,432.3 371.2,416.0 378.2,413.6 384.4,406.6 382.9,402.0"/>
<polygon fill="#b3e7fb" points="418.3,358.7 421.5,360.7 439.0,353.5 442.2,359.7 446.3,364.9 449.7,377.3 443.5,382.5 439.3,386.1 440.4,389.2 427.7,397.0 424.6,406.3 414.2,404.2 417.3,393.9 414.2,381.4 418.3,371.1"/>
<polygon fill="#daf2fc" points="434.5,376.0 438.0,377.0 440.5,382.0 439.3,386.1 436.0,386.5 434.0,381.0"/>
<polygon fill="#8adaf8" points="427.0,368.0 432.0,366.0 436.0,370.0 435.5,375.0 431.0,378.0 427.0,375.0"/>
<polygon fill="#8adaf8" points="395.3,419.0 414.2,404.2 424.6,406.3 427.0,409.0 422.5,414.6 430.8,419.8 432.8,423.9 426.6,432.2 422.5,431.2 426.6,441.6 424.6,443.6 409.0,435.3 399.7,432.2 398.4,430.0 393.7,417.5"/>
<polygon fill="#8adaf8" points="424.6,406.3 427.7,397.0 440.4,389.2 445.5,390.8 447.1,393.9 448.1,397.5 451.8,398.0 458.0,393.3 464.2,395.4 468.9,397.0 467.3,399.6 460.0,402.7 454.9,406.8 450.7,413.0 447.8,415.4 441.6,418.8 436.0,419.5 431.9,417.4 430.8,419.8 422.5,414.6 427.0,409.0"/>
<polygon fill="#8adaf8" points="431.9,417.4 436.0,419.5 441.6,418.8 447.8,415.4 454.7,421.6 458.9,432.6 462.3,438.2 465.1,441.6 461.6,443.7 460.2,446.5 458.2,449.9 452.6,448.5 446.4,445.1 444.3,438.2 447.1,434.0 443.0,432.6 441.6,427.1 433.3,421.6"/>
<polygon fill="#b3e7fb" points="430.8,419.8 431.9,417.4 433.3,421.6 441.6,427.1 443.0,432.6 447.1,434.0 444.3,438.2 446.4,445.1 452.6,448.5 447.8,457.5 442.3,462.3 433.3,456.8 427.4,457.3 424.6,443.6 426.6,441.6 422.5,431.2 426.6,432.2 432.8,423.9"/>
<polygon fill="#8adaf8" points="452.6,448.5 458.2,449.9 460.2,451.3 464.4,457.5 465.1,463.0 462.3,469.9 456.8,476.8 447.1,476.8 445.0,469.9 442.3,462.3 447.8,457.5"/>
<polygon fill="#8adaf8" points="461.6,443.7 465.1,446.5 464.4,449.2 460.2,451.3 458.2,449.9 460.2,446.5"/>
<polygon fill="#b3e7fb" points="442.3,462.3 445.0,469.9 447.1,476.8 456.8,476.8 452.6,482.4 451.1,491.8 441.8,501.1 434.6,510.2 432.5,501.9 431.5,499.8 429.4,488.4 438.8,472.8"/>
<polygon fill="#daf2fc" points="416.0,463.5 427.4,457.3 433.3,456.8 442.3,462.3 438.8,472.8 429.4,488.4 431.5,499.8 426.3,499.8 419.1,501.9 420.1,499.8 418.0,496.7 416.0,482.2"/>
<polygon fill="#b3e7fb" points="381.3,440.2 388.3,441.0 391.4,436.2 389.1,430.7 398.4,430.0 399.7,432.2 409.0,435.3 424.6,443.6 427.4,457.3 416.0,463.5 413.9,458.9 396.8,456.5 388.3,459.6 385.2,462.0 384.4,454.2 391.4,451.1 392.2,445.6"/>
<polygon fill="#daf2fc" points="363.4,454.2 368.0,452.0 376.6,454.2 381.3,440.2 392.2,445.6 391.4,451.1 384.4,454.2 385.2,462.0 387.5,471.3 377.4,464.3 368.1,468.2 365.0,463.5"/>
<polygon fill="#b3e7fb" points="388.3,459.6 396.8,456.5 413.9,458.9 416.0,463.5 416.0,482.2 418.0,496.7 410.8,495.6 404.6,497.7 401.5,494.6 399.2,487.6 390.6,488.4 388.3,474.4 387.5,471.3 385.2,462.0"/>
<polygon fill="#daf2fc" points="353.3,479.1 355.6,468.2 368.1,468.2 377.4,464.3 387.5,471.3 388.3,474.4 390.6,488.4 376.6,494.6 361.1,499.3 358.8,493.1"/>
<polygon fill="#b3e7fb" points="314.9,424.1 320.1,423.1 330.5,434.5 338.8,432.4 342.9,428.3 347.0,423.1 357.4,430.4 363.6,434.5 367.3,432.3 371.9,434.5 380.5,439.5 381.3,440.2 376.6,454.2 368.0,452.0 363.4,454.2 365.0,463.5 368.1,468.2 355.6,468.2 353.3,479.1 347.1,486.8 341.7,488.4 336.2,477.5 330.0,469.7 325.3,468.7 323.2,446.9 319.1,436.6 314.9,431.4"/>
<polygon fill="#daf2fc" points="320.1,471.8 325.3,468.7 330.0,469.7 336.2,477.5 341.7,488.4 347.1,486.8 353.3,479.1 358.8,493.1 361.1,499.3 368.3,502.9 368.3,513.3 362.2,512.2 349.9,516.0 340.4,517.9 339.4,527.4 334.7,526.5 329.0,522.7 327.1,517.0 323.3,507.5 316.6,504.6 317.6,496.1 322.2,492.5 322.2,478.0"/>
<polygon fill="#daf2fc" points="361.1,499.3 376.6,494.6 390.6,488.4 399.2,487.6 401.5,494.6 404.6,499.8 401.5,507.0 400.4,519.5 395.2,525.7 391.1,525.7 389.8,524.6 381.2,525.5 372.7,522.7 370.8,516.0 368.3,513.3 368.3,502.9"/>
<polygon fill="#33c2f2" points="404.6,499.8 410.8,495.6 418.0,496.7 420.1,499.8 419.1,501.9 426.3,499.8 432.5,501.9 434.6,510.2 430.5,514.3 420.1,517.4 411.8,519.5 403.5,523.6 395.2,525.7 392.5,528.5 393.5,532.5 392.8,536.5 390.2,533.5 390.5,528.0 392.0,524.0 395.2,520.5 400.4,519.5 401.5,507.0"/>
<polygon fill="#daf2fc" points="396.0,539.0 398.3,541.5 396.5,548.0 391.0,553.0 386.5,552.5 384.3,548.5 386.0,543.0 391.0,540.0"/>
<polygon fill="#daf2fc" points="464.3,497.2 465.1,501.1 462.0,512.0 458.1,522.1 455.0,515.9 455.8,505.8 460.4,498.0"/>
</g>
<circle cx="427.8" cy="531.4" r="0.7" fill="#b3e7fb"/><circle cx="427.8" cy="535" r="0.7" fill="#b3e7fb"/><circle cx="433" cy="533.7" r="0.6" fill="#b3e7fb"/>
<text x="124.5" y="527" font-size="8" fill="#555" font-family="Liberation Sans">搜索指数</text>
<text x="124.5" y="537.8" font-size="8" fill="#999" font-family="Liberation Sans">高</text>
<rect x="137.2" y="531" width="7.3" height="7.3" rx="1.5" fill="#2bc0f2"/>
<rect x="148.7" y="531" width="7.3" height="7.3" rx="1.5" fill="#5ccff6"/>
<rect x="160.2" y="531" width="7.3" height="7.3" rx="1.5" fill="#8ddcf8"/>
<rect x="171.7" y="531" width="7.3" height="7.3" rx="1.5" fill="#b6e8fb"/>
<rect x="183.2" y="531" width="7.3" height="7.3" rx="1.5" fill="#d9f2fd"/>
<text x="194" y="537.8" font-size="8" fill="#999" font-family="Liberation Sans">低</text>
<rect x="520.5" y="502.5" width="34" height="48.5" fill="#fff" stroke="#ececec" stroke-width="0.8"/>
<path d="M521 503 H545 Q543.5 505 540.5 505.5 Q536 506 533 507 Q531 508 530.5 509.5 Q529.5 510.5 528.5 509.5 Q526.5 507.5 523 507 Q521 506.5 521 505.5Z" fill="#d9d9d9"/><ellipse cx="529.2" cy="513" rx="2.3" ry="1.9" fill="#d9d9d9"/><path d="M550.5 503 L553 503 L552 506.5 Z" fill="#d9d9d9"/>
<circle cx="542.5" cy="509.5" r="0.55" fill="#cfcfcf"/>
<circle cx="544.0" cy="510.5" r="0.55" fill="#cfcfcf"/>
<circle cx="533.0" cy="520.5" r="0.55" fill="#cfcfcf"/>
<circle cx="532.0" cy="521.5" r="0.55" fill="#cfcfcf"/>
<circle cx="539.0" cy="520.5" r="0.55" fill="#cfcfcf"/>
<circle cx="541.0" cy="520.5" r="0.55" fill="#cfcfcf"/>
<circle cx="546.5" cy="521.5" r="0.55" fill="#cfcfcf"/>
<circle cx="539.0" cy="531.0" r="0.55" fill="#cfcfcf"/>
<circle cx="543.0" cy="532.0" r="0.55" fill="#cfcfcf"/>
<circle cx="546.0" cy="532.5" r="0.55" fill="#cfcfcf"/>
<circle cx="540.0" cy="535.0" r="0.55" fill="#cfcfcf"/>
<circle cx="535.0" cy="538.0" r="0.55" fill="#cfcfcf"/>
<circle cx="529.0" cy="539.0" r="0.55" fill="#cfcfcf"/>
<circle cx="532.5" cy="543.0" r="0.55" fill="#cfcfcf"/>
<circle cx="534.5" cy="546.5" r="0.55" fill="#cfcfcf"/>
<circle cx="532.0" cy="549.0" r="0.55" fill="#cfcfcf"/>
<text x="544" y="543.3" font-size="4.6" fill="#777" font-family="Liberation Sans">南海</text><text x="544" y="549.8" font-size="4.6" fill="#777" font-family="Liberation Sans">诸岛</text>
</svg><!--/MAP-->
</body></html>
